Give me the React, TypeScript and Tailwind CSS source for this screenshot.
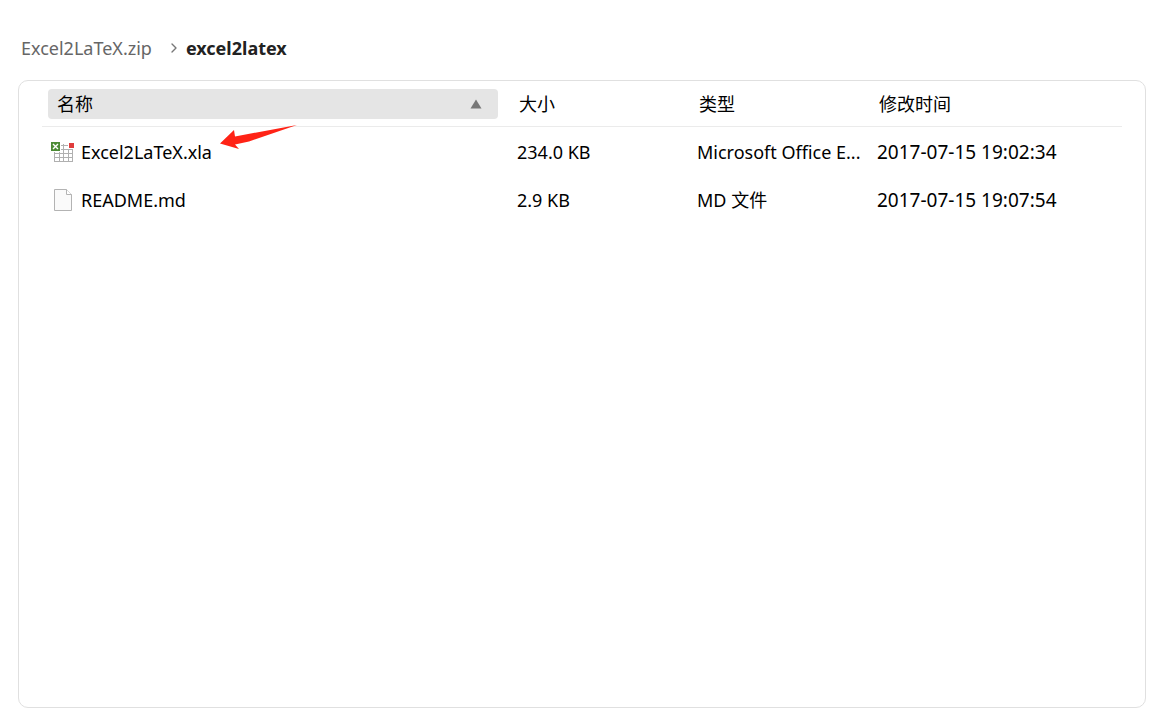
import { ChevronRight } from 'lucide-react';

const files = [
  { name: 'Excel2LaTeX.xla', size: '234.0 KB', type: 'Microsoft Office E...', modified: '2017-07-15 19:02:34', icon: 'xla' },
  { name: 'README.md', size: '2.9 KB', type: 'MD 文件', modified: '2017-07-15 19:07:54', icon: 'blank' },
];

function XlaIcon() {
  return (
    <svg width="24" height="24" viewBox="0 0 24 24" className="shrink-0" aria-hidden="true">
      <rect x="3" y="4" width="19" height="18" fill="#fff" />
      <path
        d="M3.5 4V22M8.5 4V22M12.5 4V22M17.5 4V22M21.5 4V22M3 5.5H22M3 9.5H22M3 13.5H22M3 17.5H22M3 21.5H22"
        stroke="#b0b0b0"
        fill="none"
      />
      <rect x="0" y="1" width="10" height="11" fill="#fff" />
      <rect x="0" y="2" width="9" height="9" fill="#4c8b35" />
      <path d="M2 4L7 9M7 4L2 9" stroke="#fff" strokeWidth="1.4" />
      <rect x="17" y="2" width="7" height="7" fill="#fff" />
      <rect x="18" y="3" width="5" height="5" fill="#e03c3c" />
    </svg>
  );
}

function BlankIcon() {
  return (
    <svg width="24" height="24" viewBox="0 0 24 24" className="shrink-0" aria-hidden="true">
      <path d="M3.5 1.5H15.5L20.5 6.5V22.5H3.5Z" fill="#fafafa" stroke="#b3b3b3" />
      <path d="M15.5 1.5V6.5H20.5" fill="#fff" stroke="#b3b3b3" />
    </svg>
  );
}

function Arrow() {
  return (
    <svg width="78" height="26" viewBox="0 0 78 26" className="absolute -top-4 left-full ml-2" aria-hidden="true">
      <path d="M0 19.5L14 6L15 12.5L77 1L29 17.5L15 20.5L19 25Z" fill="#ff2316" />
    </svg>
  );
}

export default function App() {
  return (
    <div className="flex min-h-screen flex-col bg-white pt-9 pr-[13px] pb-[7px] pl-[18px] font-['Noto_Sans','Noto_Sans_CJK_SC',sans-serif] text-[18px] leading-6 text-black">
      <nav className="mb-5 flex items-center pl-[3px]" aria-label="Breadcrumb">
        <a href="#root" className="text-[#666]">Excel2LaTeX.zip</a>
        <ChevronRight className="mr-1 ml-[14px] h-4 w-4 text-[#777]" strokeWidth={2} />
        <a href="#excel2latex" className="font-bold text-[#222]" aria-current="page">excel2latex</a>
      </nav>

      <main className="flex-1 rounded-[10px] border border-[#e0e0e0] px-[23px]">
        <table className="w-full table-fixed border-separate border-spacing-0 text-left">
          <thead>
            <tr className="h-[46px] *:border-b *:border-[#ebebeb] *:font-normal">
              <th className="pr-[10px] pl-[6px]" aria-sort="ascending">
                <button className="flex h-[30px] w-full items-center justify-between rounded bg-[#e5e5e5] pr-4 pl-[9px]">
                  名称
                  <svg width="12" height="10" viewBox="0 0 12 10" aria-hidden="true">
                    <path d="M6 0.5L11.5 9.5H0.5Z" fill="#777" />
                  </svg>
                </button>
              </th>
              <th className="w-[180px] pl-[11px]">大小</th>
              <th className="w-[180px] pl-[11px]">类型</th>
              <th className="w-[254px] pl-[11px]">修改时间</th>
            </tr>
          </thead>
          <tbody>
            {files.map((file) => (
              <tr key={file.name} className="h-12 *:pt-px *:pl-[9px]">
                <td>
                  <div className="flex items-center gap-[6px]">
                    {file.icon === 'xla' ? <XlaIcon /> : <BlankIcon />}
                    <span className="relative">
                      {file.name}
                      {file.icon === 'xla' && <Arrow />}
                    </span>
                  </div>
                </td>
                <td>{file.size}</td>
                <td className="whitespace-nowrap">{file.type}</td>
                <td className="text-[19px]">{file.modified}</td>
              </tr>
            ))}
          </tbody>
        </table>
      </main>
    </div>
  );
}
